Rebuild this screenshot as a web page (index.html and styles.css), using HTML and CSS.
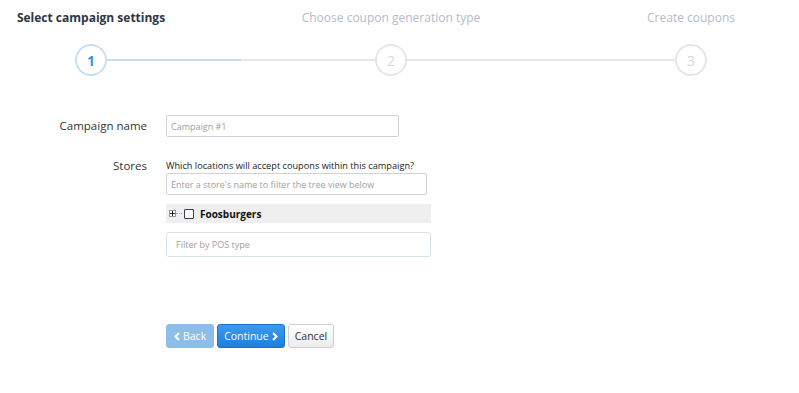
FILE: index.html
```html
<!DOCTYPE html>
<html lang="en">
<head>
  <meta charset="UTF-8">
  <title>New Campaign</title>
  <link rel="stylesheet" href="styles.css">
</head>
<body>

  <div class="wizard">
    <div class="step-titles">
      <div class="step-title active">Select campaign settings</div>
      <div class="step-title">Choose coupon generation type</div>
      <div class="step-title">Create coupons</div>
    </div>
    <div class="step-track">
      <span class="step-dot active">1</span>
      <span class="step-line half"></span>
      <span class="step-dot">2</span>
      <span class="step-line"></span>
      <span class="step-dot">3</span>
    </div>
  </div>

  <form class="settings">
    <div class="form-row name-row">
      <label class="form-label">Campaign name</label>
      <input class="text-input name-input" type="text" placeholder="Campaign #1">
    </div>

    <div class="form-row stores-row">
      <label class="form-label">Stores</label>
      <div class="stores-body">
        <p class="help">Which locations will accept coupons within this campaign?</p>
        <input class="text-input store-filter" type="text" placeholder="Enter a store's name to filter the tree view below">
        <div class="tree-row">
          <span class="tree-toggle"></span>
          <span class="tree-dots"></span>
          <span class="tree-check"></span>
          <span class="tree-name">Foosburgers</span>
        </div>
        <input class="text-input pos-filter" type="text" placeholder="Filter by POS type">
      </div>
    </div>

    <div class="actions">
      <button type="button" class="btn btn-back">
        <svg class="chev" width="6" height="9" viewBox="0 0 6 9"><path d="M5 1 L1.5 4.5 L5 8" fill="none" stroke="#fff" stroke-width="2"/></svg>
        Back
      </button>
      <button type="button" class="btn btn-continue">
        Continue
        <svg class="chev" width="6" height="9" viewBox="0 0 6 9"><path d="M1 1 L4.5 4.5 L1 8" fill="none" stroke="#fff" stroke-width="2"/></svg>
      </button>
      <button type="button" class="btn btn-cancel">Cancel</button>
    </div>
  </form>

</body>
</html>
```

FILE: styles.css
```css
body {
  font-family: 'Open Sans', sans-serif;
  margin: 0;
  padding: 0;
  background-color: #fff;
  color: #333;
}

/* wizard header */

.wizard {
  padding-top: 9px;
}

.step-titles {
  display: grid;
  grid-template-columns: 180px 180px 180px;
  column-gap: 120px;
  margin-left: 1px;
}

.step-title {
  text-align: center;
  font-size: 12px;
  line-height: 18px;
  color: #b4bcc7;
  white-space: nowrap;
}

.step-title.active {
  color: #2c3644;
  font-weight: bold;
}

.step-track {
  display: flex;
  align-items: center;
  margin: 17px 0 0 75px;
  width: 632px;
}

.step-dot {
  width: 28px;
  height: 28px;
  border: 2px solid #e3e7ed;
  border-radius: 50%;
  display: flex;
  align-items: center;
  justify-content: center;
  font-size: 14px;
  color: #d3d8e0;
}

.step-dot.active {
  border-color: #c8def3;
  color: #3d8fe0;
  font-weight: bold;
}

.step-line {
  flex: 1;
  height: 2px;
  background-color: #e4e8ee;
}

.step-line.half {
  background: linear-gradient(to right, #c6ddf2 50%, #e4e8ee 50%);
}

/* form */

.settings {
  margin-top: 39px;
}

.form-row {
  display: flex;
  align-items: flex-start;
}

.form-label {
  width: 147px;
  text-align: right;
  margin-right: 19px;
  font-size: 11.5px;
  color: #333;
}

.name-row .form-label {
  line-height: 22px;
}

.text-input {
  box-sizing: border-box;
  font-family: 'Open Sans', sans-serif;
  font-size: 9px;
  border: 1px solid #d3d3d3;
  border-radius: 2px;
  padding: 0 4px;
  color: #333;
  display: block;
}

.text-input::placeholder {
  color: #a0a0a0;
}

.name-input {
  width: 233px;
  height: 22px;
}

.stores-row {
  margin-top: 22px;
}

.stores-row .form-label {
  line-height: 18px;
  margin-top: -2px;
}

.stores-body {
  width: 265px;
}

.help {
  margin: 0;
  font-size: 9.2px;
  line-height: 14px;
  color: #222;
}

.store-filter {
  width: 261px;
  height: 22px;
  margin-top: 0;
}

.tree-row {
  display: flex;
  align-items: center;
  height: 19px;
  margin-top: 9px;
  background-color: #efefef;
  padding-left: 3px;
}

.tree-toggle {
  width: 7px;
  height: 7px;
  border: 1px solid #999;
  box-sizing: border-box;
  background:
    linear-gradient(#222, #222) center / 5px 1px no-repeat,
    linear-gradient(#222, #222) center / 1px 5px no-repeat,
    #fff;
}

.tree-dots {
  width: 6px;
  border-top: 1px dotted #aaa;
  margin-right: 2px;
}

.tree-check {
  width: 10px;
  height: 10px;
  border: 1px solid #3a3f52;
  border-radius: 1px;
  background-color: #fff;
  box-sizing: border-box;
  margin-right: 6px;
}

.tree-name {
  font-size: 10px;
  font-weight: bold;
  color: #111;
}

.pos-filter {
  width: 265px;
  height: 25px;
  margin-top: 9px;
  border-color: #d9e1ea;
  border-radius: 3px;
  padding-left: 9px;
}

.actions {
  display: flex;
  gap: 3px;
  margin: 67px 0 0 166px;
}

.btn {
  font-family: 'Open Sans', sans-serif;
  font-size: 10.5px;
  height: 24px;
  border-radius: 3px;
  padding: 0 6px;
  display: flex;
  align-items: center;
  gap: 3px;
  cursor: pointer;
}

.chev {
  flex-shrink: 0;
}

.btn-back {
  background-color: #8dbde9;
  border: 1px solid #8dbde9;
  color: #fff;
  padding: 0 7px;
}

.btn-continue {
  background: linear-gradient(#3c9af0, #1e7fdc);
  border: 1px solid #1a73c9;
  color: #fff;
}

.btn-cancel {
  background: linear-gradient(#fff, #ececec);
  border: 1px solid #cfcfcf;
  color: #333;
}
```
